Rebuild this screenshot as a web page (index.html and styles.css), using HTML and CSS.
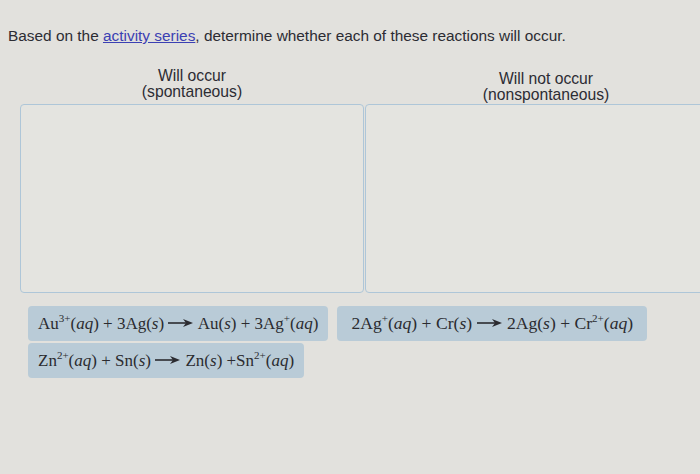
FILE: index.html
```html
<!DOCTYPE html>
<html>
	<head>
		<title>Activity series</title>
		<link rel="stylesheet" href="styles.css">
	</head>
	<body>
		<div class="page">
			<p class="prompt">Based on the <a href="#">activity series</a>, determine whether each of these reactions will occur.</p>
			<div class="bins">
				<div class="bin">
					<div class="label">Will occur<br>(spontaneous)</div>
					<div class="drop"></div>
				</div>
				<div class="bin right">
					<div class="label">Will not occur<br>(nonspontaneous)</div>
					<div class="drop"></div>
				</div>
			</div>
			<div class="pool">
				<div class="chip">Au<sup>3+</sup>(<i>aq</i>) + 3Ag(<i>s</i>) <svg class="arrow" viewBox="0 0 26 10"><line x1="0" y1="5" x2="20" y2="5" stroke-width="1.6" /><path d="M15 1 L25 5 L15 9 L18 5 Z" /></svg> Au(<i>s</i>) + 3Ag<sup>+</sup>(<i>aq</i>)</div>
				<div class="chip wide">2Ag<sup>+</sup>(<i>aq</i>) + Cr(<i>s</i>) <svg class="arrow" viewBox="0 0 26 10"><line x1="0" y1="5" x2="20" y2="5" stroke-width="1.6" /><path d="M15 1 L25 5 L15 9 L18 5 Z" /></svg> 2Ag(<i>s</i>) + Cr<sup>2+</sup>(<i>aq</i>)</div>
				<div class="chip">Zn<sup>2+</sup>(<i>aq</i>) + Sn(<i>s</i>) <svg class="arrow" viewBox="0 0 26 10"><line x1="0" y1="5" x2="20" y2="5" stroke-width="1.6" /><path d="M15 1 L25 5 L15 9 L18 5 Z" /></svg> Zn(<i>s</i>) +Sn<sup>2+</sup>(<i>aq</i>)</div>
			</div>
		</div>
	</body>
</html>
```

FILE: styles.css
```css
body {
	margin: 0;
	background: #e2e1dd;
	font-family: "Liberation Sans", Arial, sans-serif;
	color: #2c2c33;
	overflow: hidden;
}

.page {
	padding: 27px 0 0 8px;
	height: 474px;
	box-sizing: border-box;
}

.prompt {
	margin: 0;
	font-size: 15.4px;
	line-height: 18px;
}

.prompt a {
	color: #3b40b3;
}

.bins {
	display: grid;
	grid-template-columns: 344px 362px;
	gap: 1px;
	margin: 21px 0 0 12px;
}

.bin .label {
	text-align: center;
	font-size: 15.7px;
	line-height: 16px;
	padding-top: 2px;
	height: 36px;
}

.bin.right .label {
	padding-top: 5px;
	height: 33px;
}

.drop {
	height: 189px;
	border: 1px solid #aec6d8;
	border-radius: 4px;
	box-sizing: border-box;
	background: #e4e4e0;
}

.pool {
	display: flex;
	flex-wrap: wrap;
	gap: 2px 9px;
	margin: 13px 0 0 20px;
}

.chip {
	background: #b9cbd7;
	border-radius: 4px;
	padding: 0 10px;
	height: 35px;
	line-height: 35px;
	font-family: "Liberation Serif", "Times New Roman", serif;
	font-size: 17px;
	color: #2b2b30;
	white-space: nowrap;
}

.chip.wide {
	padding: 0 14px;
	font-size: 17.6px;
}

.chip sup {
	font-size: 11px;
	line-height: 0;
	vertical-align: 7px;
}

.chip .arrow {
	width: 26px;
	height: 10px;
	vertical-align: 1px;
}

.chip .arrow line {
	stroke: #2b2b30;
}

.chip .arrow path {
	fill: #2b2b30;
}
```
